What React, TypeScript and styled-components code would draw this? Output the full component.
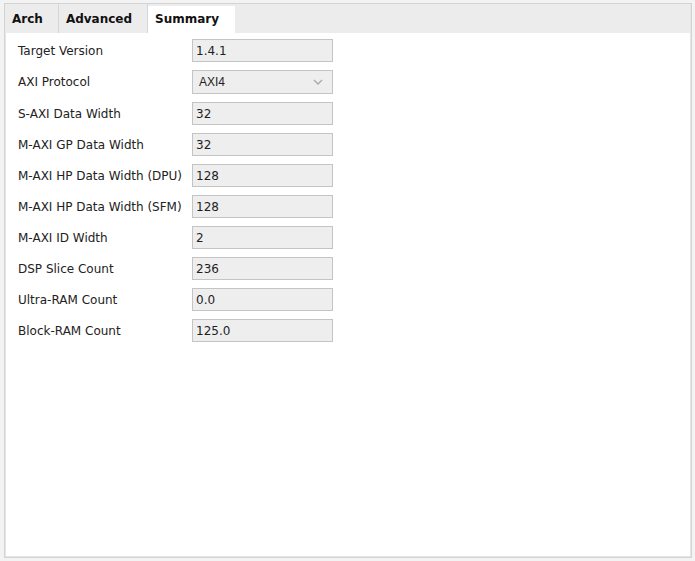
import React from "react";
import styled, { createGlobalStyle } from "styled-components";

const Global = createGlobalStyle`
  html, body { margin: 0; padding: 0; background: #f3f3f3; }
  body { font-family: "DejaVu Sans", Verdana, sans-serif; font-size: 12px; color: #222; }
`;

const Frame = styled.div`
  margin: 3px 3px 0 4px;
  height: 555px;
  box-sizing: border-box;
  border: 1px solid #d3d3d3;
  box-shadow: inset 0 0 0 1px #e6e6e6;
  padding: 0 1px 1px 0;
  display: flex;
  flex-direction: column;
  background: #fff;
`;

const TabBar = styled.div`
  display: flex;
  height: 29px;
  background: #ececec;
`;

const Tab = styled.div<{ $active?: boolean }>`
  display: flex;
  align-items: center;
  padding: 0 15px 0 7px;
  font-weight: bold;
  font-size: 12px;
  color: #111;
  background: ${(p) => (p.$active ? "#fff" : "transparent")};
  border-right: 1px solid ${(p) => (p.$active ? "#fff" : "#d6d6d6")};
  margin-top: ${(p) => (p.$active ? "2px" : "0")};
  padding-bottom: ${(p) => (p.$active ? "2px" : "0")};
`;

const Content = styled.div`
  flex: 1;
  background: #fff;
  margin-left: 1px;
  padding: 6px 12px;
  display: grid;
  grid-template-columns: 174px 141px;
  row-gap: 8px;
  align-content: start;
`;

const Label = styled.div`
  display: flex;
  align-items: center;
  font-size: 12px;
  color: #222;
`;

const Field = styled.div`
  box-sizing: border-box;
  height: 23px;
  border: 1px solid #c4c4c4;
  background: #eeeeee;
  display: flex;
  align-items: center;
  padding-left: 3px;
  font-size: 12px;
  color: #1e1e1e;
`;

const Select = styled(Field)`
  height: 24px;
  justify-content: space-between;
  padding-left: 6px;
  padding-right: 9px;
  font-family: "Liberation Sans", Arial, sans-serif;
  font-size: 12px;
`;

const rows: [string, string][] = [
  ["Target Version", "1.4.1"],
  ["AXI Protocol", "AXI4"],
  ["S-AXI Data Width", "32"],
  ["M-AXI GP Data Width", "32"],
  ["M-AXI HP Data Width (DPU)", "128"],
  ["M-AXI HP Data Width (SFM)", "128"],
  ["M-AXI ID Width", "2"],
  ["DSP Slice Count", "236"],
  ["Ultra-RAM Count", "0.0"],
  ["Block-RAM Count", "125.0"],
];

const Chevron = () => (
  <svg width="10" height="6" viewBox="0 0 10 6">
    <path d="M1 1 L5 5 L9 1" fill="none" stroke="#a8a8a8" strokeWidth="1.3" />
  </svg>
);

export default function App() {
  return (
    <>
      <Global />
      <Frame>
        <TabBar>
          <Tab>Arch</Tab>
          <Tab>Advanced</Tab>
          <Tab $active>Summary</Tab>
        </TabBar>
        <Content>
          {rows.map(([label, value]) => (
            <React.Fragment key={label}>
              <Label>{label}</Label>
              {label === "AXI Protocol" ? (
                <Select>
                  <span>{value}</span>
                  <Chevron />
                </Select>
              ) : (
                <Field>{value}</Field>
              )}
            </React.Fragment>
          ))}
        </Content>
      </Frame>
    </>
  );
}
